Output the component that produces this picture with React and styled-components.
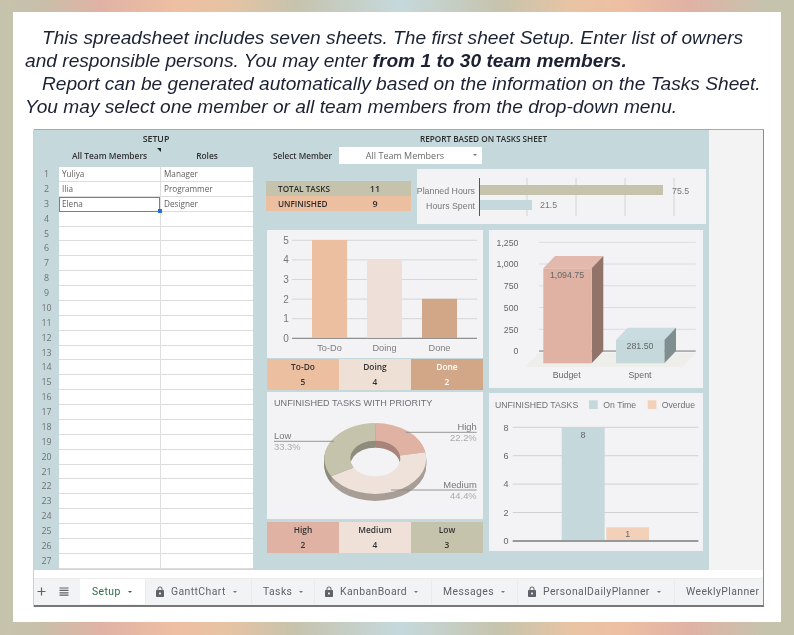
import React from "react";
import styled, { createGlobalStyle } from "styled-components";

const GlobalStyle = createGlobalStyle`
  html, body {
    margin: 0;
    padding: 0;
    background: #c6c3ad;
  }
  * {
    box-sizing: border-box;
  }
`;

const Page = styled.div`
  width: 794px;
  height: 635px;
  overflow: hidden;
  display: flex;
  flex-direction: column;
  background: #c6c3ad;
`;

const Band = styled.div`
  height: ${(props) => props.$height}px;
  flex: none;
  background: linear-gradient(
    90deg,
    #c6c3ad 0,
    #c8bfa9 40px,
    #e0b2a5 100px,
    #eebfa2 175px,
    #e6c3a4 230px,
    #c6c3ad 295px,
    #c5d9dc 400px,
    #c6c3ad 500px,
    #e8c4a4 570px,
    #eebfa2 620px,
    #e0b2a5 690px,
    #c6c3ad 765px
  );
`;

const Card = styled.div`
  flex: 1;
  margin: 0 13px;
  background: #fff;
  padding: 13.5px 0 0 12px;
  filter: blur(0.35px);
`;

const Intro = styled.p`
  margin: 0;
  font-family: "Liberation Sans", Arial, sans-serif;
  font-style: italic;
  font-size: 19.15px;
  line-height: 23px;
  color: #1c2233;
  white-space: nowrap;

  b {
    font-weight: bold;
  }
`;

const Indent = styled.span`
  display: inline-block;
  width: 17px;
`;

const Sheet = styled.div`
  width: 730px;
  height: 477px;
  margin: 12.5px 0 0 9px;
  display: flex;
  flex-direction: column;
  background: #fff;
  border-right: 1px solid #8a8a8a;
  border-bottom: 2px solid #777;
  box-shadow: 0 -1px 0 #a8a8a8, -1px 0 0 #cfcfcf;
  overflow: hidden;
`;

const SheetBody = styled.div`
  display: flex;
  height: 440px;
  flex: none;
`;

const SetupPane = styled.div`
  width: 219px;
  flex: none;
  background: #c5d9dc;
`;

const HeaderTitle = styled.div`
  font-family: "Open Sans", sans-serif;
  font-weight: 600;
  line-height: 12px;
  color: #2c2c2c;
  text-align: center;
`;

const SetupTitle = styled(HeaderTitle)`
  font-size: 8.8px;
  padding: 3px 0 0 25px;
`;

const SetupHead = styled.div`
  position: relative;
  height: 37px;
`;

const Columns = styled.div`
  display: grid;
  grid-template-columns: 25px 101px 1px 92px;
`;

const HeadLabel = styled.div`
  grid-column: ${(props) => props.$col};
  font-family: "Open Sans", sans-serif;
  font-weight: 600;
  font-size: 8.4px;
  line-height: 12px;
  margin-top: 4.5px;
  color: #333;
  text-align: center;
`;

const NoteMark = styled.div`
  position: absolute;
  left: 123px;
  top: 18px;
  width: 0;
  height: 0;
  border-top: 4px solid #222;
  border-left: 4px solid transparent;
`;

const Row = styled(Columns)`
  height: 14.88px;
`;

const RowNumber = styled.div`
  font-family: "Open Sans", sans-serif;
  font-size: 8.8px;
  line-height: 14.9px;
  color: #707070;
  text-align: center;
`;

const Cell = styled.div`
  position: relative;
  grid-column: ${(props) => props.$col};
  background: #fff;
  border-bottom: 1px solid #dcdcdc;
  font-family: "Open Sans", sans-serif;
  font-size: 8.2px;
  line-height: 14px;
  padding-left: 3px;
  color: #5f5f5f;
  ${(props) =>
    props.$selected &&
    `
    outline: 1.5px solid #4f86d6;
    outline-offset: -1.5px;
    z-index: 1;
  `}
`;

const Handle = styled.span`
  position: absolute;
  right: -2px;
  bottom: -2px;
  width: 4px;
  height: 4px;
  background: #1f6fe0;
`;

const Gutter = styled.div`
  grid-column: 3;
  background: #dedede;
`;

const Dashboard = styled.div`
  width: 456px;
  flex: none;
  background: #c5d9dc;
`;

const ReportHead = styled.div`
  height: 35.5px;
`;

const ReportTitle = styled(HeaderTitle)`
  font-size: 8.2px;
  padding: 3px 0 0 5px;
`;

const SelectRow = styled.div`
  display: flex;
  align-items: center;
  gap: 7px;
  padding-left: 20px;
  margin-top: 2px;
`;

const SelectLabel = styled.span`
  width: 59px;
  font-family: "Open Sans", sans-serif;
  font-weight: 600;
  font-size: 8.2px;
  color: #333;
  white-space: nowrap;
`;

const Dropdown = styled.div`
  width: 143px;
  height: 17px;
  position: relative;
  background: #fff;
  font-family: "Open Sans", sans-serif;
  font-size: 9px;
  line-height: 17px;
  padding-right: 11px;
  text-align: center;
  color: #6a6a6a;
`;

const Caret = styled.i`
  display: block;
  flex: none;
  width: 0;
  height: 0;
  border-left: 2.6px solid transparent;
  border-right: 2.6px solid transparent;
  border-top: 2.6px solid ${(props) => props.$color || "#777"};
`;

const DropCaret = styled(Caret)`
  position: absolute;
  right: 5px;
  top: 7px;
`;

const TopRow = styled.div`
  display: flex;
  align-items: center;
  gap: 6px;
  padding: 3px 0 0 13px;
`;

const Kpis = styled.div`
  width: 145px;
  flex: none;
`;

const Kpi = styled.div`
  display: grid;
  grid-template-columns: 1fr 72px;
  height: 15px;
  padding-left: 12px;
  background: ${(props) => props.$bg};
  font-family: "Open Sans", sans-serif;
  font-weight: 600;
  font-size: 8.2px;
  line-height: 15px;
  color: #2c2c2c;

  span:last-child {
    font-size: 9px;
    text-align: center;
  }
`;

const Panel = styled.div`
  background: #f3f3f5;
  flex: none;
  width: ${(props) => props.$width}px;
  height: ${(props) => props.$height}px;
  margin-top: ${(props) => props.$top || 0}px;

  svg {
    display: block;
  }
  text {
    font-family: "Liberation Sans", Arial, sans-serif;
  }
`;

const ChartGrid = styled.div`
  display: flex;
  gap: 6px;
  padding: 6px 0 0 14px;
`;

const ChartColumn = styled.div`
  width: ${(props) => props.$width}px;
  flex: none;
`;

const Chips = styled.div`
  display: grid;
  grid-template-columns: repeat(3, 1fr);
  height: 29px;
  margin-top: ${(props) => props.$top}px;
`;

const Chip = styled.div`
  background: ${(props) => props.$bg};
  color: ${(props) => props.$color || "#333"};
  font-family: "Open Sans", sans-serif;
  font-weight: 600;
  font-size: 8.4px;
  line-height: 14.8px;
  padding-top: 1.5px;
  text-align: center;
`;

const SidePane = styled.div`
  flex: 1;
  background: #f3f3f3;
`;

const TabBar = styled.div`
  margin-top: 8px;
  height: 27px;
  flex: none;
  display: flex;
  background: #f1f3f4;
  border-top: 1px solid #ececec;
  padding-bottom: 1px;
  font-family: Roboto, sans-serif;
  font-size: 10.4px;
  letter-spacing: 0.42px;
  color: #5f6368;
  overflow: hidden;
  white-space: nowrap;
`;

const BarTool = styled.div`
  flex: none;
  width: ${(props) => props.$width}px;
  display: flex;
  align-items: center;
  justify-content: center;
`;

const Tab = styled.div`
  flex: none;
  width: ${(props) => props.$width}px;
  display: flex;
  align-items: center;
  gap: 7px;
  padding-left: ${(props) => (props.$locked ? 9 : 12)}px;
  background: ${(props) => (props.$active ? "#fff" : "transparent")};
  color: ${(props) => (props.$active ? "#2b6e45" : "#5f6368")};
  box-shadow: 1px 0 0 #e9ebec;
`;

const LockIcon = styled.svg`
  width: 12px;
  height: 12px;
  margin-right: -2px;
  fill: #5f6368;
  flex: none;
`;

const Lock = () => (
  <LockIcon viewBox="0 0 24 24">
    <path d="M18 8h-1V6c0-2.76-2.24-5-5-5S7 3.24 7 6v2H6c-1.1 0-2 .9-2 2v10c0 1.1.9 2 2 2h12c1.1 0 2-.9 2-2V10c0-1.1-.9-2-2-2zm-6 9c-1.1 0-2-.9-2-2s.9-2 2-2 2 .9 2 2-.9 2-2 2zm3.1-9H8.9V6c0-1.71 1.39-3.1 3.1-3.1 1.71 0 3.1 1.39 3.1 3.1v2z" />
  </LockIcon>
);

const people = [
  ["Yuliya", "Manager"],
  ["Ilia", "Programmer"],
  ["Elena", "Designer"],
];

const tabs = [
  { name: "GanttChart", width: 106, locked: true },
  { name: "Tasks", width: 63 },
  { name: "KanbanBoard", width: 117, locked: true },
  { name: "Messages", width: 86 },
  { name: "PersonalDailyPlanner", width: 157, locked: true },
  { name: "WeeklyPlanner", width: 90, noCaret: true },
];

const HoursChart = () => (
  <svg width="289" height="55">
    {[110, 159, 208, 257].map((x) => (
      <line key={x} x1={x} x2={x} y1="9" y2="47" stroke="#d4d4d4" />
    ))}
    <rect x="63" y="16" width="183" height="10" fill="#c6c3ad" />
    <rect x="63" y="31" width="52" height="10" fill="#c5d9dc" />
    <line x1="62.5" x2="62.5" y1="9" y2="47" stroke="#555" />
    <g fontSize="8.8" fill="#777">
      <text x="58" y="24.5" textAnchor="end">Planned Hours</text>
      <text x="58" y="39.5" textAnchor="end">Hours Spent</text>
      <text x="255" y="24.5">75.5</text>
      <text x="123" y="39">21.5</text>
    </g>
  </svg>
);

const StatusChart = () => {
  const rows = [5, 4, 3, 2, 1, 0];
  const bars = [
    { name: "To-Do", value: 5, x: 45, fill: "#ecbfa1" },
    { name: "Doing", value: 4, x: 100, fill: "#eee0d8" },
    { name: "Done", value: 2, x: 155, fill: "#d2a788" },
  ];
  return (
    <svg width="216" height="128">
      {rows.map((n, i) => (
        <g key={n}>
          <line x1="25" x2="210" y1={10.3 + i * 19.6} y2={10.3 + i * 19.6} stroke={n ? "#d6d6d8" : "#777"} />
          <text x="19" y={13.8 + i * 19.6} fontSize="10" fill="#777" textAnchor="middle">{n}</text>
        </g>
      ))}
      {bars.map((b) => (
        <g key={b.name}>
          <rect x={b.x} y={108 - b.value * 19.6} width="35" height={b.value * 19.6} fill={b.fill} />
          <text x={b.x + 17.5} y="120.5" fontSize="9.2" fill="#7d7d7d" textAnchor="middle">{b.name}</text>
        </g>
      ))}
    </svg>
  );
};

const BudgetChart = () => {
  const ticks = ["1,250", "1,000", "750", "500", "250", "0"];
  return (
    <svg width="214" height="158">
      <polygon points="36,137 50,123 207,123 193,137" fill="#eeeeeb" />
      {ticks.map((t, i) => (
        <g key={t}>
          <line x1="50" x2="206.7" y1={12.3 + i * 21.75} y2={12.3 + i * 21.75} stroke={t === "0" ? "#777" : "#dcdcdc"} />
          <text x="29.5" y={15.6 + i * 21.75} fontSize="8.8" fill="#666" textAnchor="end">{t}</text>
        </g>
      ))}
      <polygon points="54.3,38.3 66,26 114.3,26 102.7,38.3" fill="#e2b9ac" />
      <polygon points="102.7,38.3 114.3,26 114.3,121 102.7,133.3" fill="#91736a" />
      <rect x="54.3" y="38.3" width="48.4" height="95" fill="#dfb2a4" />
      <polygon points="127,110 138.7,97.7 187,97.7 175.3,110" fill="#c9dcdf" />
      <polygon points="175.3,110 187,97.7 187,121 175.3,133.3" fill="#7f8e8e" />
      <rect x="127" y="110" width="48.3" height="23.3" fill="#c5d9dc" />
      <g fontSize="8.8" fill="#666" textAnchor="middle">
        <text x="78" y="48">1,094.75</text>
        <text x="151" y="119">281.50</text>
        <text x="77.7" y="148">Budget</text>
        <text x="151" y="148">Spent</text>
      </g>
    </svg>
  );
};

// ring sector on an ellipse, angles clockwise from 12 o'clock
const ringSector = (from, to, dy) => {
  const cx = 108.3;
  const cy = 66.5 + dy;
  const point = (deg, rx, ry) => {
    const a = (deg * Math.PI) / 180;
    return `${cx + rx * Math.sin(a)} ${cy - ry * Math.cos(a)}`;
  };
  const large = to - from > 180 ? 1 : 0;
  return [
    `M${point(from, 51, 35.5)}`,
    `A51 35.5 0 ${large} 1 ${point(to, 51, 35.5)}`,
    `L${point(to, 25, 17.8)}`,
    `A25 17.8 0 ${large} 0 ${point(from, 25, 17.8)}`,
    "Z",
  ].join(" ");
};

const slices = [
  { from: 0, to: 80, top: "#dfb2a4", wall: "#a8847a" },
  { from: 80, to: 240, top: "#efe2da", wall: "#a89e97" },
  { from: 240, to: 360, top: "#c6c3ad", wall: "#8e8c7b" },
];

const PriorityChart = () => (
  <svg width="216" height="127">
    <text x="7" y="13.5" fontSize="9.1" fill="#6f6f6f">UNFINISHED TASKS WITH PRIORITY</text>
    {[7, 6, 5, 4, 3, 2, 1].map((dy) =>
      slices.map((s) => <path key={`${dy}-${s.from}`} d={ringSector(s.from, s.to, dy)} fill={s.wall} />)
    )}
    {slices.map((s) => (
      <path key={s.from} d={ringSector(s.from, s.to, 0)} fill={s.top} />
    ))}
    <g stroke="#8a8a8a" strokeWidth="0.9">
      <line x1="138.7" x2="209.7" y1="40.3" y2="40.3" />
      <line x1="7" x2="67" y1="49.3" y2="49.3" />
      <line x1="124" x2="209.7" y1="98" y2="98" />
    </g>
    <g fontSize="9.4" fill="#777">
      <text x="209.7" y="38" textAnchor="end">High</text>
      <text x="7" y="47">Low</text>
      <text x="209.7" y="95.5" textAnchor="end">Medium</text>
    </g>
    <g fontSize="9.4" fill="#aaa">
      <text x="209.7" y="49" textAnchor="end">22.2%</text>
      <text x="7" y="58">33.3%</text>
      <text x="209.7" y="106.5" textAnchor="end">44.4%</text>
    </g>
  </svg>
);

const OverdueChart = () => (
  <svg width="214" height="158">
    <g fontSize="8.7" fill="#6f6f6f">
      <text x="6" y="15">UNFINISHED TASKS</text>
      <rect x="100" y="7.3" width="8.7" height="8.7" fill="#c5d9dc" />
      <text x="114.3" y="14.5">On Time</text>
      <rect x="158.7" y="7.3" width="8.7" height="8.7" fill="#f3d1b9" />
      <text x="172.7" y="14.5">Overdue</text>
    </g>
    {[8, 6, 4, 2].map((n, i) => (
      <line key={n} x1="23.7" x2="209.3" y1={34.3 + i * 28.4} y2={34.3 + i * 28.4} stroke="#d0d0d0" />
    ))}
    <rect x="72.7" y="34.3" width="43" height="113.7" fill="#c5d9dc" />
    <rect x="117.3" y="134.3" width="42.7" height="13.7" fill="#f3d1b9" />
    <line x1="23.7" x2="209.3" y1="148" y2="148" stroke="#999" strokeWidth="2" />
    <g fontSize="9" fill="#666" textAnchor="middle">
      {[8, 6, 4, 2, 0].map((n, i) => (
        <text key={n} x="17" y={37.5 + i * 28.4}>{n}</text>
      ))}
      <text x="94" y="45">8</text>
      <text x="138.7" y="143.5">1</text>
    </g>
  </svg>
);

const App = () => {
  const rows = Array.from({ length: 27 }, (_, i) => i + 1);

  return (
    <Page>
      <GlobalStyle />
      <Band $height={12} />
      <Card>
        <Intro>
          <Indent />This spreadsheet includes seven sheets. The first sheet Setup. Enter list of owners
          <br />
          and responsible persons. You may enter <b>from 1 to 30 team members.</b>
          <br />
          <Indent />Report can be generated automatically based on the information on the Tasks Sheet.
          <br />
          You may select one member or all team members from the drop-down menu.
        </Intro>
        <Sheet>
          <SheetBody>
            <SetupPane>
              <SetupHead>
                <SetupTitle>SETUP</SetupTitle>
                <Columns>
                  <HeadLabel $col={2}>All Team Members</HeadLabel>
                  <HeadLabel $col={4}>Roles</HeadLabel>
                </Columns>
                <NoteMark />
              </SetupHead>
              {rows.map((n) => {
                const person = people[n - 1] || ["", ""];
                return (
                  <Row key={n}>
                    <RowNumber>{n}</RowNumber>
                    <Cell $col={2} $selected={n === 3}>
                      {person[0]}
                      {n === 3 && <Handle />}
                    </Cell>
                    <Gutter />
                    <Cell $col={4}>{person[1]}</Cell>
                  </Row>
                );
              })}
            </SetupPane>
            <Dashboard>
              <ReportHead>
                <ReportTitle>REPORT BASED ON TASKS SHEET</ReportTitle>
                <SelectRow>
                  <SelectLabel>Select Member</SelectLabel>
                  <Dropdown>
                    All Team Members
                    <DropCaret />
                  </Dropdown>
                </SelectRow>
              </ReportHead>
              <TopRow>
                <Kpis>
                  <Kpi $bg="#c6c3ad">
                    <span>TOTAL TASKS</span>
                    <span>11</span>
                  </Kpi>
                  <Kpi $bg="#ecbfa1">
                    <span>UNFINISHED</span>
                    <span>9</span>
                  </Kpi>
                </Kpis>
                <Panel $width={289} $height={55}>
                  <HoursChart />
                </Panel>
              </TopRow>
              <ChartGrid>
                <ChartColumn $width={216}>
                  <Panel $width={216} $height={128}>
                    <StatusChart />
                  </Panel>
                  <Chips $top={1}>
                    <Chip $bg="#ecbfa1">To-Do<br />5</Chip>
                    <Chip $bg="#eee0d5">Doing<br />4</Chip>
                    <Chip $bg="#d2a788" $color="#fff">Done<br />2</Chip>
                  </Chips>
                  <Panel $width={216} $height={127} $top={4}>
                    <PriorityChart />
                  </Panel>
                  <Chips $top={3}>
                    <Chip $bg="#dfb2a4">High<br />2</Chip>
                    <Chip $bg="#efe0d8">Medium<br />4</Chip>
                    <Chip $bg="#c6c3ad">Low<br />3</Chip>
                  </Chips>
                </ChartColumn>
                <ChartColumn $width={214}>
                  <Panel $width={214} $height={158}>
                    <BudgetChart />
                  </Panel>
                  <Panel $width={214} $height={158} $top={5}>
                    <OverdueChart />
                  </Panel>
                </ChartColumn>
              </ChartGrid>
            </Dashboard>
            <SidePane />
          </SheetBody>
          <TabBar>
            <BarTool $width={14}>
              <svg width="9" height="9" viewBox="0 0 9 9">
                <path d="M4.5 0.5v8M0.5 4.5h8" stroke="#5f6368" strokeWidth="1.2" />
              </svg>
            </BarTool>
            <BarTool $width={32}>
              <svg width="10" height="9" viewBox="0 0 10 9">
                <path d="M0.5 1h9M0.5 3.4h9M0.5 5.8h9M0.5 8.2h9" stroke="#5f6368" strokeWidth="1.2" />
              </svg>
            </BarTool>
            <Tab $active $width={65}>
              Setup
              <Caret $color="#2b6e45" />
            </Tab>
            {tabs.map((t) => (
              <Tab key={t.name} $width={t.width} $locked={t.locked}>
                {t.locked && <Lock />}
                <span>{t.name}</span>
                {!t.noCaret && <Caret />}
              </Tab>
            ))}
          </TabBar>
        </Sheet>
      </Card>
      <Band $height={13} />
    </Page>
  );
};

export default App;
